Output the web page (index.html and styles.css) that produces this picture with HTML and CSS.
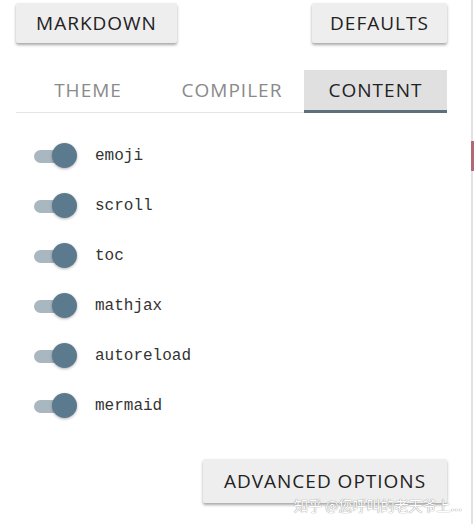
FILE: index.html
```html
<!DOCTYPE html>
<html>
<head>
<meta charset="utf-8">
<link rel="stylesheet" href="styles.css">
</head>
<body>
<div class="page">
  <div class="panel">
    <div class="top-row">
      <button class="btn btn-md">MARKDOWN</button>
      <button class="btn btn-def">DEFAULTS</button>
    </div>
    <div class="tabs">
      <div class="tab tab-theme">THEME</div>
      <div class="tab tab-compiler">COMPILER</div>
      <div class="tab tab-active">CONTENT</div>
    </div>
    <ul class="options">
      <li class="opt"><span class="toggle"><span class="track"></span><span class="knob"></span></span><span class="label">emoji</span></li>
      <li class="opt"><span class="toggle"><span class="track"></span><span class="knob"></span></span><span class="label">scroll</span></li>
      <li class="opt"><span class="toggle"><span class="track"></span><span class="knob"></span></span><span class="label">toc</span></li>
      <li class="opt"><span class="toggle"><span class="track"></span><span class="knob"></span></span><span class="label">mathjax</span></li>
      <li class="opt"><span class="toggle"><span class="track"></span><span class="knob"></span></span><span class="label">autoreload</span></li>
      <li class="opt"><span class="toggle"><span class="track"></span><span class="knob"></span></span><span class="label">mermaid</span></li>
    </ul>
    <div class="bottom-row">
      <button class="btn btn-adv">ADVANCED OPTIONS</button>
    </div>
  </div>
  <div class="edge"><span class="edge-mark"></span></div>
  <div class="watermark">知乎 @您呼叫的老天爷上...</div>
</div>
</body>
</html>
```
FILE: styles.css
```css
html, body {
  margin: 0;
  padding: 0;
  background: #ffffff;
}
.page {
  position: relative;
  width: 474px;
  height: 524px;
  display: flex;
  overflow: hidden;
}
.panel {
  width: 431px;
  padding: 3px 0 0 16px;
  display: flex;
  flex-direction: column;
}
.top-row {
  display: flex;
  justify-content: space-between;
}
.btn {
  font-family: "Open Sans", "Liberation Sans", sans-serif;
  font-size: 19px;
  letter-spacing: 1px;
  color: #222;
  background: #eeeeee;
  border: none;
  border-radius: 2px;
  box-shadow: 0 2px 3px rgba(0,0,0,0.35);
  height: 40px;
  padding: 0;
  margin: 0;
}
.btn-md { width: 161px; }
.btn-def { width: 135px; }
.tabs {
  margin-top: 27px;
  display: flex;
  border-bottom: 1px solid #e4e4e4;
  height: 42px;
}
.tab {
  font-family: "Open Sans", "Liberation Sans", sans-serif;
  font-size: 19px;
  letter-spacing: 1px;
  color: #8a8a8a;
  display: flex;
  align-items: center;
  justify-content: center;
  height: 40px;
}
.tab-theme { width: 144px; }
.tab-compiler { width: 144px; }
.tab-active {
  width: 143px;
  background: #e0e0e0;
  color: #222;
  border-bottom: 3px solid #5d707d;
  margin-bottom: -1px;
}
.options {
  list-style: none;
  margin: 0;
  padding: 31px 0 0 18px;
  display: flex;
  flex-direction: column;
  gap: 26px;
}
.opt {
  display: flex;
  align-items: center;
  height: 24px;
}
.toggle {
  position: relative;
  width: 43px;
  height: 24px;
  margin-right: 18px;
}
.track {
  position: absolute;
  left: 0;
  top: 6px;
  width: 36px;
  height: 13px;
  border-radius: 7px;
  background: #a9b7c1;
}
.knob {
  position: absolute;
  left: 18px;
  top: -1px;
  width: 25px;
  height: 25px;
  border-radius: 50%;
  background: #5b7a8e;
  box-shadow: 0 1px 3px rgba(0,0,0,0.3);
}
.label {
  font-family: "Liberation Mono", "DejaVu Sans Mono", monospace;
  font-size: 16px;
  color: #333;
}
.bottom-row {
  margin-top: auto;
  margin-bottom: 21px;
  display: flex;
  justify-content: flex-end;
}
.btn-adv { width: 244px; height: 44px; }
.edge {
  width: 27px;
  position: relative;
}
.edge::after {
  content: "";
  position: absolute;
  right: 1px;
  top: 0;
  bottom: 0;
  width: 2px;
  background: #e2e2e2;
}
.edge-mark {
  position: absolute;
  right: 0;
  top: 141px;
  width: 3px;
  height: 30px;
  background: #b06a74;
  z-index: 1;
}
.watermark {
  position: absolute;
  left: 294px;
  top: 495px;
  font-family: "Noto Sans CJK SC", sans-serif;
  font-size: 14px;
  color: #fff;
  text-shadow: 0 0 1px #999, 0 0 1px #999;
  white-space: nowrap;
}
```
